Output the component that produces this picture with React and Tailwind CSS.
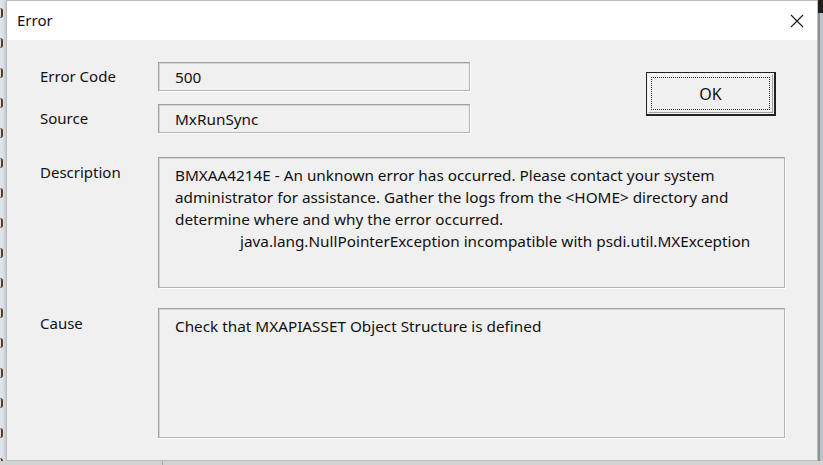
import React from "react";

const font = { fontFamily: '"Segoe UI", "Noto Sans", "Open Sans", sans-serif' };

function Field({ children, className = "" }) {
  return (
    <div
      className={
        "border border-t-[#a0a0a0] border-l-[#a0a0a0] border-r-[#b4b4b4] border-b-[#b4b4b4] bg-[#f0f0f0] shadow-[1px_1px_0_#ffffff] " +
        className
      }
    >
      <div className="h-full border-t border-l border-t-[#d4d4d4] border-l-[#d4d4d4] px-[15px] text-[15.3px] text-[#111]">
        {children}
      </div>
    </div>
  );
}

function CloseIcon() {
  return (
    <svg width="14" height="14" viewBox="0 0 14 14" className="text-[#1a1a1a]">
      <path d="M1 1 L13 13 M13 1 L1 13" stroke="currentColor" strokeWidth="1.1" fill="none" />
    </svg>
  );
}

export default function App() {
  return (
    <div className="flex h-[465px] w-[823px] flex-col overflow-hidden bg-[#cfd3d8]" style={font}>
      <div className="flex h-[461px]">
        {/* window behind, left edge */}
        <div className="flex w-[6px] flex-col">
          <div className="h-[12px] bg-[#1e1e1e]" />
          <div className="flex flex-1 flex-col gap-[20px] bg-[#dfe4ea] pt-[8px]">
            {Array.from({ length: 20 }).map((_, i) => (
              <div key={i} className="h-[10px] w-[3px] rounded-r-full border-r-2 border-[#5a3a20]" />
            ))}
          </div>
        </div>

        {/* dialog */}
        <div className="flex w-[812px] flex-col border border-[#bdbdbd] bg-[#f0f0f0] shadow-[0_0_4px_rgba(0,0,0,0.25)]">
          <div className="flex h-[39px] items-center justify-between bg-white pl-[10px] pr-[13px]">
            <span className="text-[15px] text-[#111]">Error</span>
            <CloseIcon />
          </div>

          <div className="flex flex-1 flex-col pl-[33px] pr-[32px] pt-[22px]">
            <div className="flex">
              <div className="flex flex-col gap-[13px]">
                <div className="flex items-center">
                  <span className="w-[118px] text-[15px] text-[#111]">Error Code</span>
                  <Field className="h-[29px] w-[312px]">
                    <div className="flex h-full items-center">500</div>
                  </Field>
                </div>
                <div className="flex items-center">
                  <span className="w-[118px] text-[15px] text-[#111]">Source</span>
                  <Field className="h-[29px] w-[312px]">
                    <div className="flex h-full items-center">MxRunSync</div>
                  </Field>
                </div>
              </div>

              <div className="ml-auto mr-[9px] mt-[10px]">
                <button
                  type="button"
                  className="h-[44px] w-[130px] border border-[#222] border-b-2 border-r-2 bg-[#f0f0f0] p-[1px]"
                >
                  <div className="h-full w-full border border-b-[#a0a0a0] border-l-white border-r-[#a0a0a0] border-t-white p-[2px]">
                    <div className="flex h-full w-full items-center justify-center border border-dotted border-[#333] text-[16px] text-[#111]">
                      OK
                    </div>
                  </div>
                </button>
              </div>
            </div>

            <div className="mt-[24px] flex">
              <span className="w-[118px] pt-[4px] text-[15px] text-[#111]">Description</span>
              <Field className="h-[131px] flex-1">
                <div className="pt-[5px] leading-[22px]">
                  <div>BMXAA4214E - An unknown error has occurred. Please contact your system</div>
                  <div>administrator for assistance. Gather the logs from the &lt;HOME&gt; directory and</div>
                  <div>determine where and why the error occurred.</div>
                  <div className="pl-[65px]">java.lang.NullPointerException incompatible with psdi.util.MXException</div>
                </div>
              </Field>
            </div>

            <div className="mt-[20px] flex">
              <span className="w-[118px] pt-[4px] text-[15px] text-[#111]">Cause</span>
              <Field className="h-[130px] flex-1">
                <div className="pt-[5px] leading-[22px]">Check that MXAPIASSET Object Structure is defined</div>
              </Field>
            </div>
          </div>
        </div>

        {/* window behind, right edge */}
        <div className="flex flex-1 flex-col">
          <div className="h-[13px] bg-[#1e1e1e]" />
          <div className="flex-1 border-l-2 border-[#8f8f8f] bg-[#b9c4cf]" />
        </div>
      </div>
      <div className="flex flex-1 bg-[#d2d2d2]">
        <div className="ml-[162px] w-px bg-[#a8a8a8]" />
      </div>
    </div>
  );
}
